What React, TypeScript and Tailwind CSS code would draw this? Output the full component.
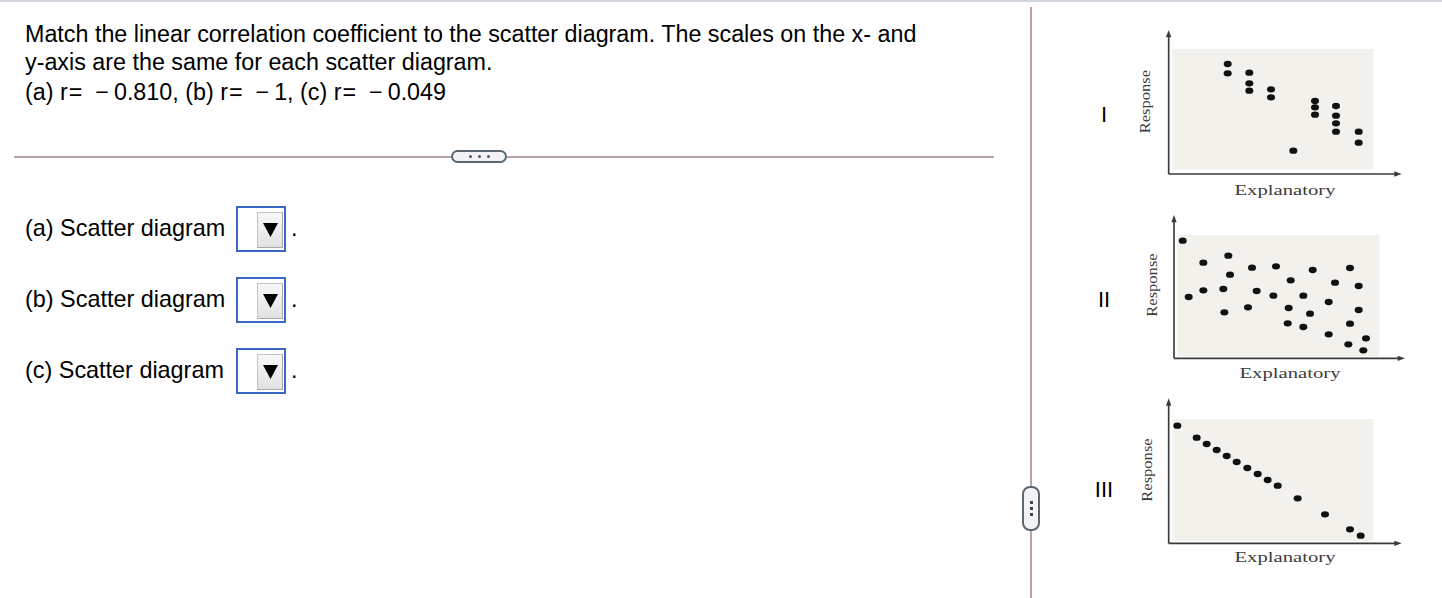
import React from "react";

type Chart = {
  label: string;
  vy: number;
  vh: number;
  plot: [number, number, number, number];
  ax: number;
  ayTop: number;
  ay: number;
  axEnd: number;
  resp: [number, number];
  expl: [number, number];
  dots: [number, number][];
};

// coordinates are in 3x units of the source picture
const charts: Chart[] = [
  {
    label: "I",
    vy: 0,
    vh: 555,
    plot: [248, 87, 850, 448],
    ax: 236,
    ayTop: 30,
    ay: 462,
    axEnd: 935,
    resp: [168, 245],
    expl: [585, 515],
    dots: [
      [413, 132], [413, 160], [478, 158], [478, 190], [478, 212], [543, 208], [543, 232],
      [610, 392], [675, 243], [675, 262], [675, 284], [738, 258], [738, 287], [738, 310],
      [738, 335], [806, 335], [806, 368],
    ],
  },
  {
    label: "II",
    vy: 15,
    vh: 555,
    plot: [262, 105, 868, 468],
    ax: 252,
    ayTop: 45,
    ay: 475,
    axEnd: 945,
    resp: [190, 255],
    expl: [600, 525],
    dots: [
      [278, 122], [340, 188], [415, 167], [296, 291], [340, 271], [400, 267], [420, 224],
      [403, 337], [486, 203], [500, 273], [474, 322], [558, 199], [550, 287], [602, 241],
      [596, 324], [593, 370], [668, 210], [640, 287], [660, 341], [640, 381], [735, 248],
      [716, 306], [716, 403], [780, 204], [806, 258], [806, 330], [780, 371], [775, 433],
      [828, 415], [820, 451],
    ],
  },
  {
    label: "III",
    vy: 15,
    vh: 585,
    plot: [248, 102, 850, 468],
    ax: 236,
    ayTop: 40,
    ay: 475,
    axEnd: 935,
    resp: [175, 255],
    expl: [585, 522],
    dots: [
      [262, 122], [320, 158], [350, 177], [380, 195], [410, 213], [440, 231], [472, 249],
      [503, 267], [533, 285], [563, 302], [623, 340], [705, 388], [780, 433], [812, 452],
    ],
  },
];

const ScatterPlot = ({ c }: { c: Chart }) => {
  const [x1, y1, x2, y2] = c.plot;
  return (
    <svg
      width={280}
      height={c.vh / 3}
      viewBox={`120 ${c.vy} 840 ${c.vh}`}
      className="block"
    >
      <rect x={x1} y={y1} width={x2 - x1} height={y2 - y1} fill="#f3f1ec" />
      <line x1={c.ax} y1={c.ayTop + 12} x2={c.ax} y2={c.ay} stroke="#3a3a3a" strokeWidth={5} />
      <line x1={c.ax} y1={c.ay} x2={c.axEnd - 12} y2={c.ay} stroke="#3a3a3a" strokeWidth={5} />
      <polygon
        points={`${c.ax},${c.ayTop} ${c.ax - 8},${c.ayTop + 22} ${c.ax + 8},${c.ayTop + 22}`}
        fill="#3a3a3a"
      />
      <polygon
        points={`${c.axEnd},${c.ay} ${c.axEnd - 22},${c.ay - 8} ${c.axEnd - 22},${c.ay + 8}`}
        fill="#3a3a3a"
      />
      {c.dots.map(([x, y], i) => (
        <ellipse key={i} cx={x} cy={y} rx={12} ry={9.5} fill="#111" />
      ))}
      <text
        x={c.resp[0]}
        y={c.resp[1]}
        transform={`rotate(-90 ${c.resp[0]} ${c.resp[1]})`}
        textAnchor="middle"
        dominantBaseline="middle"
        fontFamily="'Liberation Serif', serif"
        fontSize={46}
        textLength={190}
        lengthAdjust="spacingAndGlyphs"
        fill="#3c3c3c"
      >
        Response
      </text>
      <text
        x={c.expl[0]}
        y={c.expl[1]}
        textAnchor="middle"
        dominantBaseline="middle"
        fontFamily="'Liberation Serif', serif"
        fontSize={45}
        textLength={303}
        lengthAdjust="spacingAndGlyphs"
        fill="#3c3c3c"
      >
        Explanatory
      </text>
    </svg>
  );
};

const Select = () => (
  <div className="flex h-[46px] w-[50px] justify-end border-2 border-[#3b68c8] bg-white pt-[4px] pr-[1px]">
    <div className="flex h-[36px] w-[26px] items-center justify-center border border-[#c4c4c4] border-r-[#a8a8a8] border-b-[#a8a8a8] bg-gradient-to-b from-[#f7f7f7] to-[#e2e2e2]">
      <svg width="15" height="14" viewBox="0 0 15 14">
        <polygon points="0,0 15,0 7.5,14" fill="#000" />
      </svg>
    </div>
  </div>
);

const Eq = ({ v }: { v: string }) => (
  <span className="inline-flex items-baseline">
    <span>r</span>
    <span className="ml-[1px]">=</span>
    <span className="ml-[13px]">−</span>
    <span className="ml-[5px]">{v}</span>
  </span>
);

export default function App() {
  return (
    <div
      className="flex h-[598px] w-[1442px] overflow-hidden border-t-2 border-[#d1d5de] bg-white text-black"
      style={{ fontFamily: "'Liberation Sans', Arial, sans-serif" }}
    >
      {/* question side */}
      <div className="w-[1030px] shrink-0">
        <div className="h-[148px] pt-[18px] pl-[25px] text-[23.3px] leading-[28px]">
          <p>Match the linear correlation coefficient to the scatter diagram. The scales on the x- and</p>
          <p>y-axis are the same for each scatter diagram.</p>
          <p className="mt-[2px]">
            (a) <Eq v="0.810," /> (b) <Eq v="1," /> (c) <Eq v="0.049" />
          </p>
        </div>
        <div className="flex h-[13px] items-center pl-[14px]">
          <div className="h-[2px] w-[437px] bg-[#b7a3ae]" />
          <div className="flex h-[13px] w-[56px] items-center justify-center gap-[6px] rounded-full border-2 border-[#5b6771] bg-[#f1f3f6]">
            <span className="h-[3px] w-[3px] rounded-full bg-[#555]" />
            <span className="h-[3px] w-[3px] rounded-full bg-[#555]" />
            <span className="h-[3px] w-[3px] rounded-full bg-[#555]" />
          </div>
          <div className="h-[2px] w-[487px] bg-[#b7a3ae]" />
        </div>
        <div className="flex flex-col gap-[25px] pt-[43px] pl-[25px] text-[23.4px]">
          {["(a)", "(b)", "(c)"].map((p) => (
            <div key={p} className="flex items-center">
              <span className="w-[211px]">{p} Scatter diagram</span>
              <Select />
              <span className="ml-[5px]">.</span>
            </div>
          ))}
        </div>
      </div>

      {/* divider */}
      <div className="relative mt-[5px] w-[2px] shrink-0 bg-[#b7a3ae]">
        <div className="absolute top-[479px] left-[-8px] flex h-[45px] w-[18px] flex-col items-center justify-center gap-[3px] rounded-[8px] border-2 border-[#5b6771] bg-[#f1f3f6]">
          <span className="h-[3px] w-[3px] bg-[#444]" />
          <span className="h-[3px] w-[3px] bg-[#444]" />
          <span className="h-[3px] w-[3px] bg-[#444]" />
        </div>
      </div>

      {/* diagrams */}
      <div className="flex flex-col pt-[18px]">
        {charts.map((c) => (
          <div key={c.label} className="flex items-center">
            <span className="ml-[52px] w-[40px] pt-[4px] text-center text-[22px]">{c.label}</span>
            <div className="ml-[6px]">
              <ScatterPlot c={c} />
            </div>
          </div>
        ))}
      </div>
    </div>
  );
}
